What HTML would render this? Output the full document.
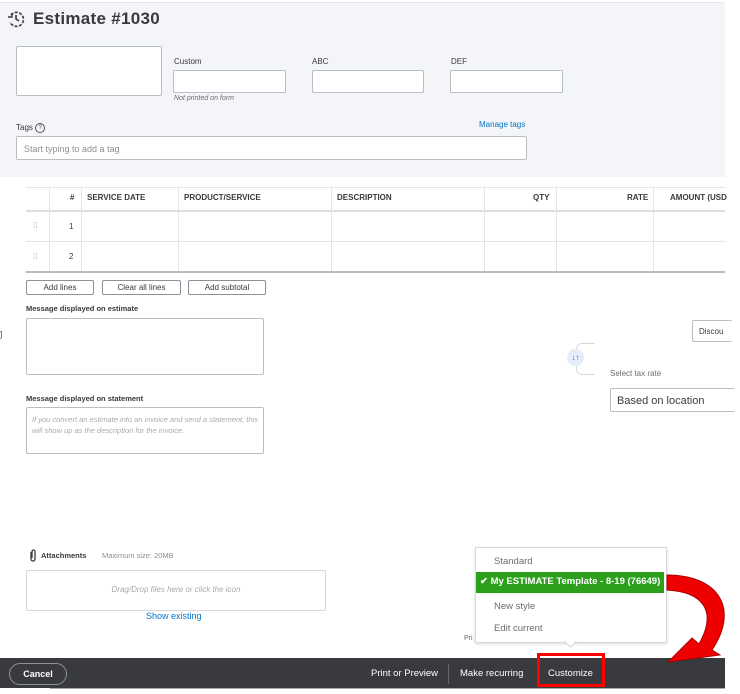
<!DOCTYPE html>
<html><head><style>
body{margin:0;width:740px;height:694px;position:relative;overflow:hidden;background:#fff;font-family:"Liberation Sans",sans-serif;color:#393a3d}
.a{position:absolute}
.inp{position:absolute;background:#fff;border:1px solid #babec5;border-radius:2px;box-sizing:border-box}
.lbl{position:absolute;font-size:8px;color:#393a3d}
.th{position:absolute;top:193px;font-size:8px;font-weight:bold;color:#393a3d}
.vl{position:absolute;width:1px;background:#e3e5e8}
.btn{position:absolute;top:280px;height:15px;border:1px solid #8d9096;border-radius:2px;font-size:8px;text-align:center;line-height:14px;box-sizing:border-box}
</style></head><body>
<div class="a" style="left:0;top:2px;width:725px;height:174px;background:#f4f5f8;border-top:1px solid #e6e7ea"></div>
<svg class="a" style="left:7px;top:10px" width="18" height="18" viewBox="0 0 18 18"><path d="M4 5 A7 7 0 1 1 3 12" fill="none" stroke="#393a3d" stroke-width="1.6" stroke-dasharray="3 1.5"/><path d="M9 5v4l3 2" fill="none" stroke="#393a3d" stroke-width="1.6"/><path d="M1 7h4V3" fill="none" stroke="#393a3d" stroke-width="1.4"/></svg>
<div class="a" style="left:33px;top:9px;font-size:17px;font-weight:bold;color:#393a3d;letter-spacing:0.3px">Estimate #1030</div>
<div class="inp" style="left:16px;top:46px;width:146px;height:50px"></div>
<div class="lbl" style="left:174px;top:57px">Custom</div>
<div class="inp" style="left:173px;top:70px;width:113px;height:23px"></div>
<div class="lbl" style="left:174px;top:95px;font-style:italic;font-size:7px;color:#6b6c72">Not printed on form</div>
<div class="lbl" style="left:312px;top:57px">ABC</div>
<div class="inp" style="left:312px;top:70px;width:112px;height:23px"></div>
<div class="lbl" style="left:451px;top:57px">DEF</div>
<div class="inp" style="left:450px;top:70px;width:113px;height:23px"></div>
<div class="lbl" style="left:16px;top:123px">Tags <span style="display:inline-block;width:8px;height:8px;border:1px solid #555;border-radius:50%;font-size:6px;text-align:center;line-height:8px;vertical-align:middle">?</span></div>
<div class="lbl" style="left:479px;top:120px;color:#0077c5">Manage tags</div>
<div class="inp" style="left:16px;top:136px;width:511px;height:24px;font-size:9px;color:#8d9096;padding:7px 0 0 7px">Start typing to add a tag</div>

<div class="a" style="left:26px;top:187px;width:699px;height:1px;background:#e3e5e8"></div>
<div class="a" style="left:26px;top:210px;width:699px;height:2px;background:#dcdee2"></div>
<div class="a" style="left:26px;top:241px;width:699px;height:1px;background:#e3e5e8"></div>
<div class="a" style="left:26px;top:271px;width:699px;height:2px;background:#b9bcc2"></div>
<div class="vl" style="left:49px;top:187px;height:84px"></div>
<div class="vl" style="left:81px;top:187px;height:84px"></div>
<div class="vl" style="left:178px;top:187px;height:84px"></div>
<div class="vl" style="left:331px;top:187px;height:84px"></div>
<div class="vl" style="left:484px;top:187px;height:84px"></div>
<div class="vl" style="left:556px;top:187px;height:84px"></div>
<div class="vl" style="left:653px;top:187px;height:84px"></div>
<div class="th" style="left:70px">#</div>
<div class="th" style="left:87px">SERVICE DATE</div>
<div class="th" style="left:184px">PRODUCT/SERVICE</div>
<div class="th" style="left:337px">DESCRIPTION</div>
<div class="th" style="left:533px">QTY</div>
<div class="th" style="left:627px">RATE</div>
<div class="th" style="left:670px;white-space:nowrap">AMOUNT (USD</div>
<div class="a" style="left:33px;top:221px;font-size:8px;color:#aaa">⁞⁞</div>
<div class="a" style="left:69px;top:222px;font-size:8px">1</div>
<div class="a" style="left:33px;top:252px;font-size:8px;color:#aaa">⁞⁞</div>
<div class="a" style="left:69px;top:252px;font-size:8px">2</div>
<div class="btn" style="left:26px;width:68px">Add lines</div>
<div class="btn" style="left:102px;width:79px">Clear all lines</div>
<div class="btn" style="left:188px;width:78px">Add subtotal</div>

<div class="lbl" style="left:26px;top:304px;font-weight:bold;font-size:7.5px">Message displayed on estimate</div>
<div class="inp" style="left:26px;top:318px;width:238px;height:57px"></div>
<div class="lbl" style="left:26px;top:394px;font-weight:bold;font-size:7.5px">Message displayed on statement</div>
<div class="inp" style="left:26px;top:407px;width:238px;height:47px;font-size:7.5px;color:#aaa;font-style:italic;padding:6px 5px;line-height:11px">If you convert an estimate into an invoice and send a statement, this will show up as the description for the invoice.</div>
<div class="a" style="left:0;top:330px;font-size:8px">]</div>

<div class="inp" style="left:692px;top:320px;width:40px;height:22px;font-size:8px;padding:6px 0 0 6px;overflow:hidden;border-right:none">Discou</div>
<div class="a" style="left:576px;top:343px;width:18px;height:30px;border:1px solid #d6d8db;border-right:none;border-radius:6px 0 0 6px"></div>
<div class="a" style="left:567px;top:349px;width:17px;height:17px;border-radius:50%;background:#e3eefa;font-size:8px;color:#4a6fa5;text-align:center;line-height:17px;font-weight:bold">↓↑</div>
<div class="lbl" style="left:610px;top:369px;color:#6b6c72">Select tax rate</div>
<div class="inp" style="left:610px;top:388px;width:125px;height:24px;font-size:11px;padding:6px 0 0 6px;border-right:none">Based on location</div>

<svg class="a" style="left:28px;top:549px" width="10" height="13" viewBox="0 0 10 13"><path d="M3 3v7a2 2 0 0 0 4 0V2.5a1.5 1.5 0 0 0-3 0V9" fill="none" stroke="#393a3d" stroke-width="1.3"/></svg>
<div class="lbl" style="left:41px;top:551px;font-weight:bold;font-size:7.5px">Attachments</div>
<div class="lbl" style="left:102px;top:551px;color:#8d9096;font-size:7.5px">Maximum size: 20MB</div>
<div class="inp" style="left:26px;top:570px;width:300px;height:41px;border-color:#d4d6da;font-size:8px;font-style:italic;color:#aaa;text-align:center;padding-top:14px">Drag/Drop files here or click the icon</div>
<div class="a" style="left:146px;top:611px;font-size:9px;color:#0077c5">Show existing</div>
<div class="a" style="left:464px;top:635px;font-size:7px;color:#6b6c72">Pri</div>

<div class="a" style="left:0;top:658px;width:725px;height:30px;background:#393a3d"></div>
<div class="a" style="left:50px;top:688px;width:675px;height:1px;background:#aaa"></div>
<div class="a" style="left:9px;top:663px;width:58px;height:22px;border:1px solid #8d9096;border-radius:12px;box-sizing:border-box;color:#fff;font-size:9px;font-weight:bold;text-align:center;line-height:20px">Cancel</div>
<div class="a" style="left:371px;top:668px;color:#fff;font-size:9.5px">Print or Preview</div>
<div class="a" style="left:448px;top:664px;width:1px;height:20px;background:#666"></div>
<div class="a" style="left:460px;top:668px;color:#fff;font-size:9.5px">Make recurring</div>
<div class="a" style="left:548px;top:668px;color:#fff;font-size:9.5px">Customize</div>
<div class="a" style="left:537px;top:653px;width:68px;height:34px;border:3px solid #f00;box-sizing:border-box"></div>

<div class="a" style="left:475px;top:547px;width:190px;height:94px;background:#fff;border:1px solid #d6d8db;box-shadow:0 1px 3px rgba(0,0,0,.15)"></div>
<div class="a" style="left:566px;top:641px;width:8px;height:8px;background:#fff;transform:rotate(45deg);margin-top:-4px;border-right:1px solid #d6d8db;border-bottom:1px solid #d6d8db"></div>
<div class="a" style="left:494px;top:556px;font-size:9.5px;color:#6b6c72">Standard</div>
<div class="a" style="left:476px;top:572px;width:188px;height:21px;background:#2ca01c"></div>
<div class="a" style="left:480px;top:576px;font-size:9.5px;color:#fff;font-weight:bold;white-space:nowrap">✔ My ESTIMATE Template - 8-19 (76649)</div>
<div class="a" style="left:494px;top:601px;font-size:9.5px;color:#6b6c72">New style</div>
<div class="a" style="left:494px;top:623px;font-size:9.5px;color:#6b6c72">Edit current</div>

<svg class="a" style="left:660px;top:570px" width="80" height="115" viewBox="0 0 80 115"><path d="M7 5 C58 5 80 38 52 80 L60 85 L8 92 L32 68 L39 74 C58 40 42 22 7 20 Z" fill="#e00" stroke="#a00" stroke-width="1"/></svg>
</body></html>
